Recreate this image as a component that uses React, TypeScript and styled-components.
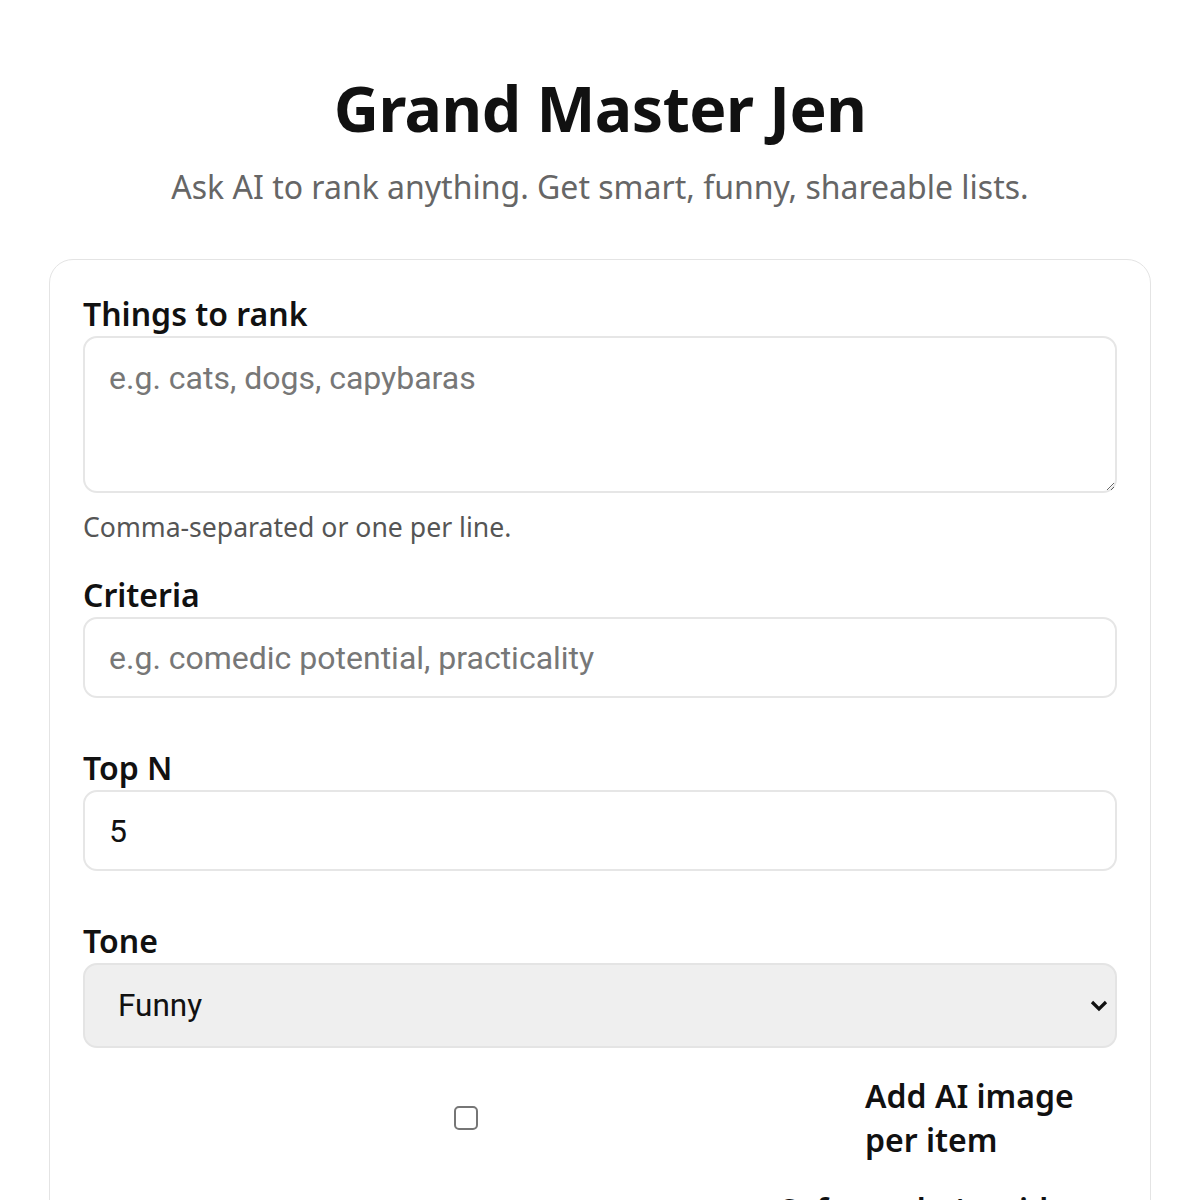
import React from 'react';
import styled, { createGlobalStyle } from 'styled-components';

const GlobalStyle = createGlobalStyle`
  html, body {
    margin: 0;
    padding: 0;
    background: #ffffff;
  }
  body {
    font-family: 'Noto Sans', 'Open Sans', sans-serif;
    color: #111111;
  }
  * {
    box-sizing: border-box;
  }
`;

const Page = styled.main`
  padding: 68px 49px 48px;
`;

const Header = styled.header`
  text-align: center;
  margin-bottom: 49px;
`;

const Title = styled.h1`
  margin: 0;
  font-size: 62.5px;
  line-height: 80px;
  font-weight: 700;
  color: #111111;
  letter-spacing: -0.5px;
`;

const Subtitle = styled.p`
  margin: 16px 0 0;
  font-size: 32px;
  line-height: 46px;
  color: #666666;
`;

const Card = styled.section`
  border: 1px solid #e4e4e4;
  border-radius: 24px;
  padding: 32px 33px 40px;
  display: flex;
  flex-direction: column;
  gap: 26px;
`;

const Field = styled.div`
  display: flex;
  flex-direction: column;
`;

const Label = styled.label`
  display: block;
  font-size: 32px;
  line-height: 44px;
  font-weight: 600;
  color: #111111;
`;

const TextArea = styled.textarea`
  width: 100%;
  height: 157px;
  border: 2px solid #e6e6e6;
  border-radius: 14px;
  padding: 20px 24px;
  font-family: Roboto, 'Liberation Sans', sans-serif;
  font-size: 32px;
  line-height: 40px;
  color: #111111;
  background: #ffffff;
  outline: none;

  &::placeholder {
    color: #777777;
  }
`;

const Helper = styled.div`
  margin-top: 14px;
  font-size: 26.6px;
  line-height: 40px;
  color: #555555;
`;

const TextInput = styled.input<{ $spaced?: boolean }>`
  width: 100%;
  height: 81px;
  border: 2px solid #e6e6e6;
  border-radius: 14px;
  padding: 0 24px;
  margin-bottom: ${(p) => (p.$spaced ? '22px' : '0')};
  font-family: Roboto, 'Liberation Sans', sans-serif;
  font-size: 32px;
  color: #111111;
  background: #ffffff;
  outline: none;

  &::placeholder {
    color: #777777;
  }
`;

const SelectWrap = styled.div`
  position: relative;
`;

const Select = styled.select`
  width: 100%;
  height: 85px;
  appearance: none;
  border: 2px solid #e4e4e4;
  border-radius: 14px;
  padding: 0 33px;
  font-family: Roboto, 'Liberation Sans', sans-serif;
  font-size: 31.5px;
  color: #111111;
  background: #efefef;
  outline: none;
`;

const Chevron = styled.svg`
  position: absolute;
  right: 8px;
  top: 50%;
  width: 20px;
  height: 14px;
  margin-top: -7px;
  pointer-events: none;
`;

const CheckRow = styled.label<{ $textWidth: number }>`
  display: grid;
  grid-template-columns: 1fr ${(p) => p.$textWidth}px;
  column-gap: 16px;
  align-items: center;
  cursor: pointer;
`;

const CheckBox = styled.input`
  appearance: none;
  justify-self: center;
  width: 24px;
  height: 24px;
  margin: 0;
  border: 2px solid #767676;
  border-radius: 5px;
  background: #ffffff;
`;

const CheckText = styled.span`
  font-size: 32px;
  line-height: 44px;
  font-weight: 600;
  color: #111111;
`;

export default function App() {
  return (
    <>
      <GlobalStyle />
      <Page>
        <Header>
          <Title>Grand Master Jen</Title>
          <Subtitle>Ask AI to rank anything. Get smart, funny, shareable lists.</Subtitle>
        </Header>
        <Card>
          <Field>
            <Label htmlFor='items'>Things to rank</Label>
            <TextArea id='items' placeholder='e.g. cats, dogs, capybaras' />
            <Helper>Comma-separated or one per line.</Helper>
          </Field>
          <Field>
            <Label htmlFor='criteria'>Criteria</Label>
            <TextInput id='criteria' $spaced placeholder='e.g. comedic potential, practicality' />
          </Field>
          <Field>
            <Label htmlFor='topn'>Top N</Label>
            <TextInput id='topn' $spaced type='number' defaultValue={5} />
          </Field>
          <Field>
            <Label htmlFor='tone'>Tone</Label>
            <SelectWrap>
              <Select id='tone' defaultValue='funny'>
                <option value='funny'>Funny</option>
                <option value='serious'>Serious</option>
                <option value='snarky'>Snarky</option>
              </Select>
              <Chevron viewBox='0 0 20 14'>
                <path d='M3 3 L10 10 L17 3' fill='none' stroke='#111' strokeWidth='3.2' />
              </Chevron>
            </SelectWrap>
          </Field>
          <CheckRow $textWidth={252}>
            <CheckBox type='checkbox' />
            <CheckText>Add AI image per item</CheckText>
          </CheckRow>
          <CheckRow $textWidth={337}>
            <CheckBox type='checkbox' />
            <CheckText>Safe mode (avoid edgy content)</CheckText>
          </CheckRow>
        </Card>
      </Page>
    </>
  );
}
